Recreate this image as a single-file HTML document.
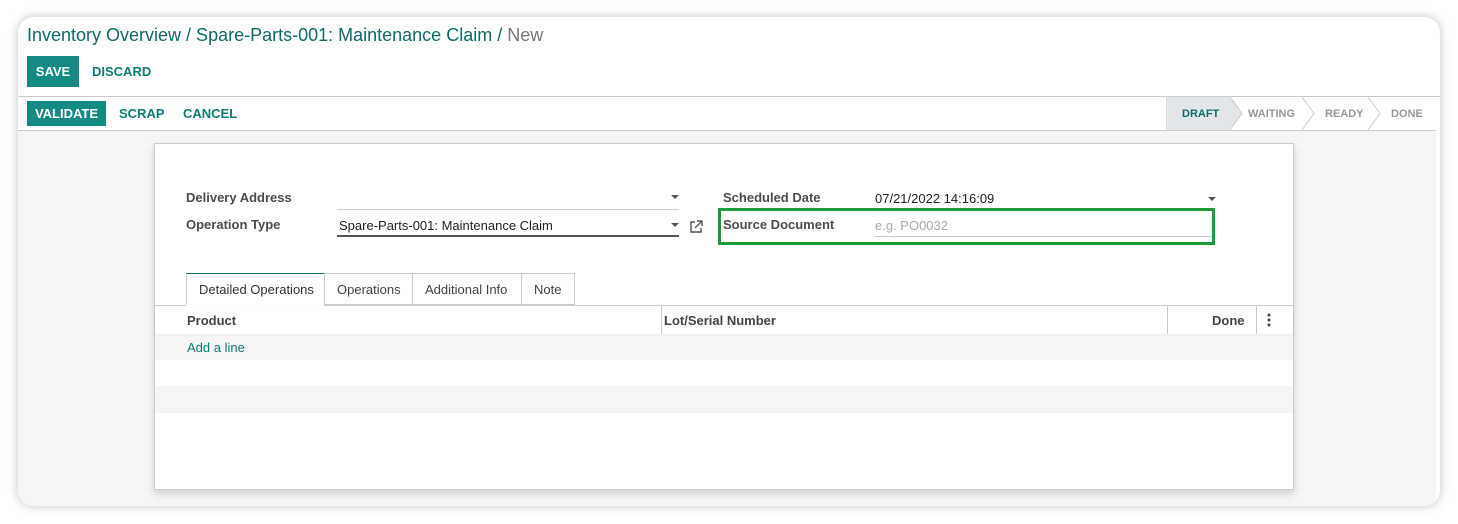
<!DOCTYPE html>
<html><head><meta charset="utf-8"><style>
*{box-sizing:border-box;margin:0;padding:0}
body{width:1458px;height:524px;background:#fff;font-family:"Liberation Sans",sans-serif;position:relative;overflow:hidden}
.frame{position:absolute;left:18px;top:17px;width:1422px;height:489px;background:#fff;border-radius:16px;box-shadow:0 0 10px rgba(0,0,0,.25);overflow:hidden}
.abs{position:absolute}
.teal{color:#0e7c73}
.btn{position:absolute;font-size:13px;font-weight:bold;display:flex;align-items:center;justify-content:center}
.lbl{position:absolute;font-size:13px;font-weight:bold;color:#4c4c4c}
</style></head><body>
<div class="frame">
 <div class="abs" style="left:9px;top:8px;font-size:18px;color:#0e6b66">Inventory Overview / Spare-Parts-001: Maintenance Claim / <span style="color:#777">New</span></div>
 <div class="btn" style="left:9px;top:39px;width:52px;height:31px;background:#138b83;color:#fff">SAVE</div>
 <div class="btn teal" style="left:74px;top:39px;height:31px">DISCARD</div>
 <div class="abs" style="left:0;top:79px;width:1422px;height:35px;border-top:1px solid #ccc;border-bottom:1px solid #ccc;background:#fff"></div>
 <div class="btn" style="left:9px;top:84px;width:79px;height:25px;background:#138b83;color:#fff">VALIDATE</div>
 <div class="btn teal" style="left:101px;top:84px;height:25px">SCRAP</div>
 <div class="btn teal" style="left:165px;top:84px;height:25px">CANCEL</div>
 <svg class="abs" style="left:1148px;top:80px" width="272" height="33">
  <polygon points="0,0 64,0 76,16.5 64,33 0,33" fill="#e2e6ea"/>
  <polyline points="0,0 0,33" stroke="#ccc"/>
  <polyline points="64,0 76,16.5 64,33" fill="none" stroke="#ccc"/>
  <polyline points="136,0 148,16.5 136,33" fill="none" stroke="#ccc"/>
  <polyline points="202,0 214,16.5 202,33" fill="none" stroke="#ccc"/>
  <text x="16" y="20" font-size="11" font-weight="bold" fill="#0e6b66" font-family="Liberation Sans">DRAFT</text>
  <text x="82" y="20" font-size="11" font-weight="bold" fill="#999" font-family="Liberation Sans">WAITING</text>
  <text x="159" y="20" font-size="11" font-weight="bold" fill="#999" font-family="Liberation Sans">READY</text>
  <text x="225" y="20" font-size="11" font-weight="bold" fill="#999" font-family="Liberation Sans">DONE</text>
 </svg>
 <div class="abs" style="left:0;top:114px;width:1422px;height:375px;background:#f5f5f5"></div>
 <div class="abs" style="left:1418px;top:80px;width:4px;height:409px;background:#fff"></div>
 <div class="abs" style="left:136px;top:126px;width:1140px;height:347px;background:#fff;border:1px solid #ccc;box-shadow:0 4px 8px rgba(0,0,0,.15)"></div>
 <div class="lbl" style="left:168px;top:173px">Delivery Address</div>
 <div class="lbl" style="left:168px;top:200px">Operation Type</div>
 <div class="abs" style="left:319px;top:192px;width:342px;border-bottom:1px solid #ccc"></div>
 <div class="abs" style="left:319px;top:218px;width:342px;border-bottom:2px solid #555"></div>
 <div class="abs" style="left:321px;top:201px;font-size:13px;color:#222">Spare-Parts-001: Maintenance Claim</div>
 <div class="abs" style="left:653px;top:178px;border-left:4px solid transparent;border-right:4px solid transparent;border-top:4px solid #555"></div>
 <div class="abs" style="left:653px;top:206px;border-left:4px solid transparent;border-right:4px solid transparent;border-top:4px solid #555"></div>
 <svg class="abs" style="left:671px;top:202px" width="15" height="15" fill="none" stroke="#555" stroke-width="1.4"><path d="M6 3H2v10h10V9"/><path d="M8 2h5v5M13 2L6 9"/></svg>
 <div class="lbl" style="left:705px;top:173px">Scheduled Date</div>
 <div class="abs" style="left:857px;top:174px;font-size:13px;color:#222">07/21/2022 14:16:09</div>
 <div class="abs" style="left:857px;top:192px;width:340px;border-bottom:1px solid #ccc"></div>
 <div class="abs" style="left:1190px;top:180px;border-left:4px solid transparent;border-right:4px solid transparent;border-top:4px solid #555"></div>
 <div class="abs" style="left:700px;top:191px;width:497px;height:37px;border:3px solid #1e9a3a"></div>
 <div class="lbl" style="left:705px;top:200px">Source Document</div>
 <div class="abs" style="left:857px;top:201px;font-size:13px;color:#aaa">e.g. PO0032</div>
 <div class="abs" style="left:857px;top:219px;width:337px;border-bottom:1px solid #ccc"></div>
 <div class="abs" style="left:168px;top:256px;width:139px;height:33px;border:1px solid #ccc;border-top:1px solid #0e6b66;border-bottom:none;background:#fff;font-size:13px;color:#333;padding:8px 0 0 12px">Detailed Operations</div>
 <div class="abs" style="left:306px;top:256px;width:89px;height:32px;border:1px solid #ccc;font-size:13px;color:#444;padding:8px 0 0 12px">Operations</div>
 <div class="abs" style="left:394px;top:256px;width:110px;height:32px;border:1px solid #ccc;font-size:13px;color:#444;padding:8px 0 0 12px">Additional Info</div>
 <div class="abs" style="left:503px;top:256px;width:54px;height:32px;border:1px solid #ccc;font-size:13px;color:#444;padding:8px 0 0 12px">Note</div>
 <div class="abs" style="left:137px;top:288px;width:1138px;height:29px;border-top:1px solid #ccc;background:#fff;box-shadow:0 1px 2px rgba(0,0,0,.1)"></div>
 <div class="abs" style="left:168px;top:288px;width:138px;border-top:1px solid #fff"></div>
 <div class="lbl" style="left:169px;top:296px;color:#444">Product</div>
 <div class="abs" style="left:643px;top:289px;height:28px;border-left:1px solid #ccc"></div>
 <div class="lbl" style="left:646px;top:296px;color:#444">Lot/Serial Number</div>
 <div class="abs" style="left:1149px;top:289px;height:28px;border-left:1px solid #ccc"></div>
 <div class="lbl" style="left:1194px;top:296px;color:#444">Done</div>
 <div class="abs" style="left:1238px;top:289px;height:28px;border-left:1px solid #ccc"></div>
 <svg class="abs" style="left:1249px;top:296px" width="4" height="14" fill="#444"><circle cx="2" cy="2" r="1.5"/><circle cx="2" cy="7" r="1.5"/><circle cx="2" cy="12" r="1.5"/></svg>
 <div class="abs" style="left:137px;top:318px;width:1138px;height:25px;background:#f5f5f5"></div>
 <div class="abs teal" style="left:169px;top:323px;font-size:13px">Add a line</div>
 <div class="abs" style="left:137px;top:369px;width:1138px;height:27px;background:#f5f5f5"></div>
</div>
</body></html>
